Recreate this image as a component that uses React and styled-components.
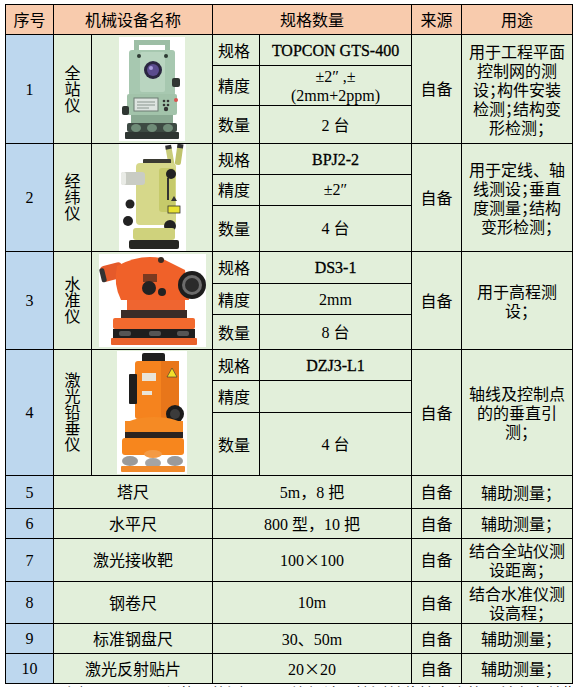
import React from 'react';
import styled, { createGlobalStyle } from 'styled-components';

const GlobalStyle = createGlobalStyle`
  html, body {
    margin: 0;
    padding: 0;
    background: #ffffff;
  }
  body {
    font-family: "Liberation Serif", "Noto Sans CJK SC", serif;
    font-size: 16px;
    color: #000;
  }
`;

const Page = styled.div`
  padding: 4px 0 0 5px;
  width: 576px;
  height: 687px;
  box-sizing: border-box;
  overflow: hidden;
`;

const Table = styled.table`
  border-collapse: collapse;
  table-layout: fixed;
  width: 567px;
`;

const Row = styled.tr`
  height: ${p => p.h}px;
`;

const Cell = styled.td`
  border: 1px solid #000;
  padding: 0;
  background: #e2efda;
  text-align: center;
  vertical-align: middle;
  line-height: 19px;
  white-space: nowrap;
`;

const HeadCell = styled(Cell).attrs({ as: 'th' })`
  background: #f8cbad;
  font-weight: normal;
  font-family: "Noto Sans CJK SC", sans-serif;
`;

const NoCell = styled(Cell)`
  background: #bdd7ee;
`;

const LabelCell = styled(Cell)`
  text-align: left;
  padding-left: 5px;
  font-family: "Noto Sans CJK SC", sans-serif;
`;

const ModelText = styled.span`
  -webkit-text-stroke: 0.3px #000;
`;

const Cjk = styled.span`
  font-family: "Noto Sans CJK SC", sans-serif;
`;

// half-width punctuation, as Word compresses it
const Punct = styled.span`
  font-family: "Noto Sans CJK SC", sans-serif;
  font-feature-settings: "halt";
`;

const Vertical = styled.span`
  display: inline-block;
  width: 1em;
  line-height: 16px;
  white-space: normal;
  word-break: break-all;
  font-family: "Noto Sans CJK SC", sans-serif;
`;

const UseText = styled.div`
  font-family: "Noto Sans CJK SC", sans-serif;
  line-height: 19px;
`;

const PicBox = styled.div`
  display: flex;
  justify-content: center;
  align-items: center;
`;

const After = styled.p`
  margin: 0;
  line-height: 18px;
  text-indent: 37px;
  font-family: "Noto Sans CJK SC", sans-serif;
  white-space: nowrap;
`;

const TotalStation = () => (
  <svg width="66" height="104" viewBox="0 0 66 104">
    <rect width="66" height="104" fill="#fff" />
    <path d="M15 3h36v13h-5V8H20v8h-5z" fill="#9dbea5" />
    <rect x="10" y="13" width="46" height="46" rx="3" fill="#a7c8b0" />
    <rect x="21" y="15" width="25" height="40" rx="2" fill="#b9d5c0" />
    <circle cx="20" cy="19" r="2" fill="#2e3a33" />
    <circle cx="47" cy="19" r="2" fill="#2e3a33" />
    <circle cx="34" cy="33" r="9" fill="#2a2640" />
    <circle cx="34" cy="33" r="6" fill="#5b4c8e" />
    <circle cx="32" cy="31" r="2" fill="#a89cdc" />
    <rect x="53" y="41" width="8" height="9" rx="2" fill="#2f3632" />
    <rect x="8" y="57" width="50" height="21" rx="2" fill="#a2c3aa" />
    <rect x="15" y="61" width="24" height="13" fill="#dde4e0" stroke="#6d7d73" strokeWidth="1" />
    <path d="M18 65h18M18 68h18M18 71h12" stroke="#8a968f" strokeWidth="1" />
    <circle cx="45" cy="64" r="1.3" fill="#333" />
    <circle cx="49" cy="64" r="1.3" fill="#333" />
    <circle cx="45" cy="68" r="1.3" fill="#333" />
    <circle cx="49" cy="68" r="1.3" fill="#333" />
    <circle cx="47" cy="72" r="2.2" fill="#333" />
    <circle cx="57" cy="63" r="2" fill="#d9534f" />
    <rect x="3" y="69" width="7" height="9" rx="2" fill="#2f3632" />
    <rect x="12" y="78" width="42" height="8" fill="#89a992" />
    <rect x="8" y="86" width="50" height="9" rx="2" fill="#3d4a43" />
    <ellipse cx="17" cy="91" rx="5" ry="4" fill="#6f8c78" />
    <ellipse cx="33" cy="91" rx="5" ry="4" fill="#6f8c78" />
    <ellipse cx="49" cy="91" rx="5" ry="4" fill="#6f8c78" />
    <rect x="6" y="95" width="54" height="7" rx="1" fill="#2e3532" />
  </svg>
);

const Theodolite = () => (
  <svg width="67" height="107" viewBox="0 0 67 107">
    <rect width="67" height="107" fill="#fff" />
    <rect x="48" y="2" width="6" height="20" rx="2" fill="#c9cc7a" transform="rotate(-10 51 12)" />
    <rect x="57" y="1" width="6" height="20" rx="2" fill="#bfc36b" transform="rotate(8 60 11)" />
    <rect x="48" y="1" width="6" height="4" fill="#333" transform="rotate(-10 51 12)" />
    <rect x="57" y="0" width="6" height="4" fill="#333" transform="rotate(8 60 11)" />
    <rect x="24" y="15" width="28" height="6" rx="1" fill="#3a3a32" />
    <rect x="17" y="19" width="40" height="62" rx="4" fill="#d6d88a" />
    <rect x="40" y="24" width="16" height="44" rx="3" fill="#c6ca6a" />
    <rect x="48" y="34" width="2" height="22" fill="#333" />
    <rect x="2" y="28" width="24" height="13" rx="3" fill="#c9ccc4" />
    <rect x="2" y="28" width="5" height="13" rx="2" fill="#e9ebe6" />
    <circle cx="52" cy="30" r="5" fill="#222" />
    <circle cx="11" cy="60" r="4.5" fill="#222" />
    <circle cx="9" cy="77" r="5" fill="#222" />
    <circle cx="51" cy="82" r="6" fill="#222" />
    <rect x="49" y="62" width="12" height="7" fill="#e8e232" stroke="#333" strokeWidth="0.8" />
    <path d="M55 52l3 5h-6z" fill="#333" />
    <rect x="14" y="84" width="42" height="12" rx="3" fill="#cfd27c" />
    <rect x="10" y="96" width="50" height="9" rx="2" fill="#262622" />
  </svg>
);

const Level = () => (
  <svg width="107" height="93" viewBox="0 0 107 93">
    <rect width="107" height="93" fill="#fff" />
    <rect x="2" y="10" width="22" height="16" rx="4" fill="#e55a2a" transform="rotate(-14 13 18)" />
    <rect x="1" y="12" width="5" height="14" rx="2" fill="#333" transform="rotate(-14 13 18)" />
    <path d="M18 12 Q40 0 62 4 L86 16 L90 46 L22 46 Q14 30 18 12z" fill="#f06129" />
    <circle cx="62" cy="6" r="3" fill="#3a2a22" />
    <rect x="44" y="20" width="14" height="8" fill="#7a3a20" />
    <circle cx="50" cy="34" r="7" fill="#222" />
    <circle cx="63" cy="38" r="4" fill="#222" />
    <circle cx="93" cy="31" r="14" fill="#1d1d1d" />
    <circle cx="93" cy="31" r="10" fill="#6b6b6b" />
    <circle cx="93" cy="31" r="7" fill="#2a2a2a" />
    <rect x="28" y="46" width="58" height="11" fill="#ef6530" />
    <rect x="22" y="56" width="66" height="8" fill="#3a2c28" />
    <rect x="14" y="64" width="82" height="11" rx="2" fill="#f26a2e" />
    <rect x="14" y="75" width="82" height="9" fill="#1e1e1e" />
    <rect x="20" y="77" width="12" height="5" rx="2" fill="#555" />
    <rect x="50" y="77" width="12" height="5" rx="2" fill="#555" />
    <rect x="78" y="77" width="12" height="5" rx="2" fill="#555" />
    <rect x="12" y="84" width="86" height="7" rx="1" fill="#e8622b" />
  </svg>
);

const Plummet = () => (
  <svg width="70" height="123" viewBox="0 0 70 123">
    <rect width="70" height="123" fill="#fff" />
    <rect x="25" y="2" width="23" height="10" rx="2" fill="#1f1f1f" />
    <rect x="18" y="10" width="44" height="58" rx="3" fill="#f5831e" />
    <rect x="44" y="10" width="18" height="58" fill="#e8761a" />
    <rect x="12" y="23" width="8" height="30" rx="1" fill="#1e1e1e" />
    <path d="M55 17l5 9h-10z" fill="#f2df2a" stroke="#333" strokeWidth="0.6" />
    <rect x="25" y="22" width="14" height="8" fill="#e9e4d8" />
    <rect x="25" y="40" width="10" height="4" fill="#e9e4d8" />
    <circle cx="58" cy="63" r="9" fill="#1b1b1b" />
    <circle cx="58" cy="63" r="5" fill="#3b3b3b" />
    <ellipse cx="37" cy="75" rx="29" ry="9" fill="#f58a24" />
    <rect x="8" y="70" width="58" height="12" fill="#f58a24" />
    <rect x="8" y="81" width="58" height="6" fill="#2a2320" />
    <rect x="5" y="87" width="62" height="17" rx="3" fill="#f7861d" />
    <ellipse cx="36" cy="103" rx="9" ry="4" fill="#f39a45" />
    <ellipse cx="13" cy="110" rx="8" ry="5" fill="#9a9a9a" />
    <ellipse cx="36" cy="112" rx="8" ry="5" fill="#a4a4a4" />
    <ellipse cx="58" cy="110" rx="8" ry="5" fill="#9a9a9a" />
    <rect x="4" y="115" width="64" height="6" rx="1" fill="#f08a2c" />
  </svg>
);

const P = () => <Punct>；</Punct>;

const instruments = [
  {
    no: 1,
    name: '全站仪',
    pic: <TotalStation />,
    heights: [31, 40, 38],
    spec: <ModelText>TOPCON GTS-400</ModelText>,
    precision: (
      <>
        ±2″ ,±
        <br />
        (2mm+2ppm)
      </>
    ),
    count: <>2 <Cjk>台</Cjk></>,
    use: (
      <>
        用于工程平面
        <br />
        控制网的测
        <br />
        设<P />构件安装
        <br />
        检测<P />结构变
        <br />
        形检测<P />
      </>
    ),
  },
  {
    no: 2,
    name: '经纬仪',
    pic: <Theodolite />,
    heights: [31, 30, 46],
    spec: <ModelText>BPJ2-2</ModelText>,
    precision: <>±2″</>,
    count: <>4 <Cjk>台</Cjk></>,
    use: (
      <>
        用于定线、轴
        <br />
        线测设<P />垂直
        <br />
        度测量<P />结构
        <br />
        变形检测<P />
      </>
    ),
  },
  {
    no: 3,
    name: '水准仪',
    pic: <Level />,
    heights: [32, 31, 35],
    spec: <ModelText>DS3-1</ModelText>,
    precision: <>2mm</>,
    count: <>8 <Cjk>台</Cjk></>,
    use: (
      <>
        用于高程测
        <br />
        设<P />
      </>
    ),
  },
  {
    no: 4,
    name: '激光铅垂仪',
    pic: <Plummet />,
    heights: [31, 32, 63],
    spec: <ModelText>DZJ3-L1</ModelText>,
    precision: null,
    count: <>4 <Cjk>台</Cjk></>,
    use: (
      <>
        轴线及控制点
        <br />
        的的垂直引
        <br />
        测<P />
      </>
    ),
  },
];

const tools = [
  { no: 5, name: '塔尺', h: 33, value: <>5m<Cjk>，</Cjk>8 <Cjk>把</Cjk></>, use: <>辅助测量<P /></> },
  { no: 6, name: '水平尺', h: 30, value: <>800 <Cjk>型，</Cjk>10 <Cjk>把</Cjk></>, use: <>辅助测量<P /></> },
  { no: 7, name: '激光接收靶', h: 43, value: <>100<Cjk>×</Cjk>100</>, use: <>结合全站仪测<br />设距离<P /></> },
  { no: 8, name: '钢卷尺', h: 42, value: <>10m</>, use: <>结合水准仪测<br />设高程<P /></> },
  { no: 9, name: '标准钢盘尺', h: 30, value: <>30<Cjk>、</Cjk>50m</>, use: <>辅助测量<P /></> },
  { no: 10, name: '激光反射贴片', h: 30, value: <>20<Cjk>×</Cjk>20</>, use: <>辅助测量<P /></> },
];

const App = () => (
  <Page>
    <GlobalStyle />
    <Table>
      <colgroup>
        <col style={{ width: 48 }} />
        <col style={{ width: 38 }} />
        <col style={{ width: 121 }} />
        <col style={{ width: 47 }} />
        <col style={{ width: 152 }} />
        <col style={{ width: 50 }} />
        <col style={{ width: 111 }} />
      </colgroup>
      <tbody>
        <Row h={30}>
          <HeadCell>序号</HeadCell>
          <HeadCell colSpan={2}>机械设备名称</HeadCell>
          <HeadCell colSpan={2}>规格数量</HeadCell>
          <HeadCell>来源</HeadCell>
          <HeadCell>用途</HeadCell>
        </Row>
        {instruments.map(item => (
          <React.Fragment key={item.no}>
            <Row h={item.heights[0]}>
              <NoCell rowSpan={3}>{item.no}</NoCell>
              <Cell rowSpan={3}>
                <Vertical>{item.name}</Vertical>
              </Cell>
              <Cell rowSpan={3}>
                <PicBox>{item.pic}</PicBox>
              </Cell>
              <LabelCell>规格</LabelCell>
              <Cell>{item.spec}</Cell>
              <Cell rowSpan={3}>
                <Cjk>自备</Cjk>
              </Cell>
              <Cell rowSpan={3}>
                <UseText>{item.use}</UseText>
              </Cell>
            </Row>
            <Row h={item.heights[1]}>
              <LabelCell>精度</LabelCell>
              <Cell>{item.precision}</Cell>
            </Row>
            <Row h={item.heights[2]}>
              <LabelCell>数量</LabelCell>
              <Cell>{item.count}</Cell>
            </Row>
          </React.Fragment>
        ))}
        {tools.map(item => (
          <Row h={item.h} key={item.no}>
            <NoCell>{item.no}</NoCell>
            <Cell colSpan={2}>
              <Cjk>{item.name}</Cjk>
            </Cell>
            <Cell colSpan={2}>{item.value}</Cell>
            <Cell>
              <Cjk>自备</Cjk>
            </Cell>
            <Cell>
              <UseText>{item.use}</UseText>
            </Cell>
          </Row>
        ))}
      </tbody>
    </Table>
    <After>2、测量仪器：工程使用的测量仪器均经计量检测单位检定合格，并在有效期内使用。</After>
  </Page>
);

export default App;
